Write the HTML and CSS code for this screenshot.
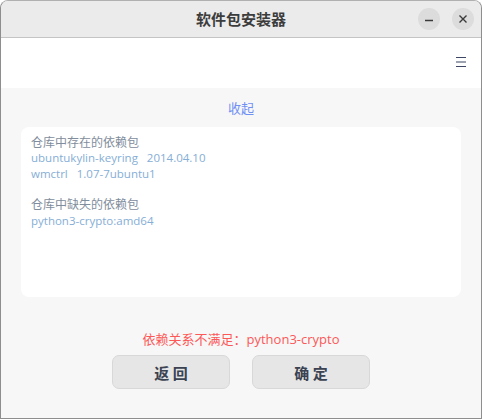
FILE: index.html
```html
<!DOCTYPE html>
<html lang="zh-CN">
<head>
<meta charset="utf-8">
<title>软件包安装器</title>
<link rel="stylesheet" href="styles.css">
</head>
<body>
<div class="window">
  <div class="titlebar">
    <div class="title">软件包安装器</div>
    <div class="wbtns">
      <span class="wbtn"><svg width="22" height="22" viewBox="0 0 22 22"><path d="M7 12.5h8" stroke="#3a3a3a" stroke-width="1.4"/></svg></span>
      <span class="wbtn"><svg width="22" height="22" viewBox="0 0 22 22"><path d="M7.5 7.5l7 7M14.5 7.5l-7 7" stroke="#3a3a3a" stroke-width="1.4"/></svg></span>
    </div>
  </div>
  <div class="header">
    <svg class="menu" width="12" height="12" viewBox="0 0 12 12"><path d="M1 1.5h10M1 6h10M1 10.5h10" stroke="#3d4763" stroke-width="1.2"/></svg>
  </div>
  <div class="content">
    <div class="collapse">收起</div>
    <div class="card">
      <div class="heading">仓库中存在的依赖包</div>
      <div class="pkg">ubuntukylin-keyring&nbsp;&nbsp;&nbsp;2014.04.10</div>
      <div class="pkg">wmctrl&nbsp;&nbsp;&nbsp;1.07-7ubuntu1</div>
      <div class="heading gap">仓库中缺失的依赖包</div>
      <div class="pkg">python3-crypto:amd64</div>
    </div>
    <div class="error">依赖关系不满足：python3-crypto</div>
    <div class="actions">
      <button class="btn">返 回</button>
      <button class="btn">确 定</button>
    </div>
  </div>
</div>
</body>
</html>
```
FILE: styles.css
```css
html, body {
  margin: 0;
  padding: 0;
  background: #ffffff;
}
body {
  font-family: "Open Sans", "Noto Sans CJK SC", sans-serif;
}
.window {
  width: 482px;
  height: 419px;
  box-sizing: border-box;
  border: 1px solid #8e8e8e;
  border-top-color: #b0b0b0;
  border-radius: 8px 8px 0 0;
  overflow: hidden;
  display: flex;
  flex-direction: column;
  background: #f7f7f7;
}
.titlebar {
  height: 36px;
  flex: none;
  background: #ebebeb;
  border-bottom: 1px solid #c4c4c4;
  display: flex;
  align-items: center;
  justify-content: center;
  position: relative;
}
.title {
  font-family: "Noto Sans CJK SC", sans-serif;
  font-size: 15px;
  font-weight: 700;
  color: #3c3c3c;
  line-height: 20px;
}
.wbtns {
  position: absolute;
  right: 7px;
  top: 7px;
  display: flex;
  gap: 12px;
}
.wbtn {
  width: 22px;
  height: 22px;
  border-radius: 50%;
  background: #dcdcdc;
  display: flex;
}
.header {
  height: 50px;
  flex: none;
  background: #ffffff;
  display: flex;
  align-items: center;
  justify-content: flex-end;
  padding-right: 14px;
}
.menu {
  margin-top: -2px;
}
.content {
  flex: 1;
  padding: 11px 20px 0;
  display: flex;
  flex-direction: column;
  align-items: center;
}
.collapse {
  font-family: "Noto Sans CJK SC", sans-serif;
  font-size: 13px;
  line-height: 18px;
  color: #7190f4;
}
.card {
  margin-top: 10px;
  align-self: stretch;
  height: 170px;
  box-sizing: border-box;
  background: #ffffff;
  border-radius: 8px;
  padding: 7px 10px;
}
.heading {
  font-family: "Noto Sans CJK SC", sans-serif;
  font-size: 12px;
  line-height: 16px;
  color: #7f8d9c;
}
.heading.gap {
  margin-top: 14px;
  margin-bottom: 1px;
}
.pkg {
  font-size: 11.5px;
  line-height: 16px;
  color: #86aed6;
}
.error {
  margin-top: 33px;
  font-size: 13px;
  line-height: 18px;
  color: #fc5858;
}
.actions {
  margin-top: 7px;
  display: flex;
  gap: 22px;
}
.btn {
  width: 118px;
  height: 34px;
  border: 1px solid #d8d8d8;
  border-radius: 7px;
  background: #e6e6e6;
  font-family: "Noto Sans CJK SC", sans-serif;
  font-size: 15px;
  font-weight: 700;
  color: #3b4252;
  padding: 0;
}
```
